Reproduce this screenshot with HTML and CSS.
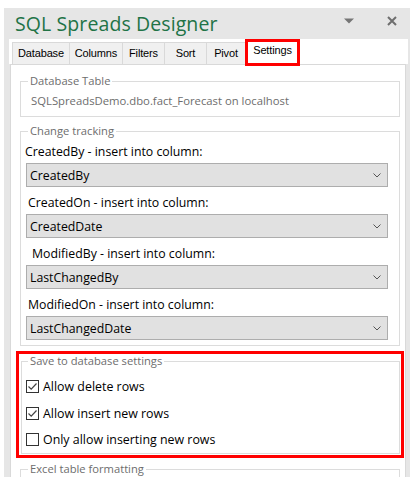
FILE: index.html
```html
<!DOCTYPE html>
<html>
<head>
<meta charset="utf-8">
<link rel="stylesheet" href="styles.css">
</head>
<body>
<div class="panel">
  <div class="titlebar">
    <span class="title">SQL Spreads Designer</span>
    <span class="ctrls">
      <svg class="ico-drop" width="10" height="6" viewBox="0 0 10 6"><path d="M0 0.5 H10 L5 5.5 Z" fill="#767676"/></svg>
      <svg class="ico-close" width="10" height="10" viewBox="0 0 10 10"><path d="M1 1 L9 9 M9 1 L1 9" stroke="#6e6e6e" stroke-width="2"/></svg>
    </span>
  </div>
  <div class="tabs">
    <div class="tab t-db">Database</div>
    <div class="tab t-col">Columns</div>
    <div class="tab t-fil">Filters</div>
    <div class="tab t-sort">Sort</div>
    <div class="tab t-piv">Pivot</div>
    <div class="tab t-set">Settings</div>
  </div>
  <div class="page">
    <fieldset class="group g-db">
      <legend>Database Table</legend>
      <div class="dbname">SQLSpreadsDemo.dbo.fact_Forecast on localhost</div>
    </fieldset>
    <fieldset class="group g-ct">
      <legend>Change tracking</legend>
      <div class="lbl l1">CreatedBy - insert into column:</div>
      <div class="select"><span>CreatedBy</span><svg width="8" height="5" viewBox="0 0 8 5"><path d="M0.5 0.5 L4 4 L7.5 0.5" fill="none" stroke="#555" stroke-width="1"/></svg></div>
      <div class="lbl l2">CreatedOn - insert into column:</div>
      <div class="select"><span>CreatedDate</span><svg width="8" height="5" viewBox="0 0 8 5"><path d="M0.5 0.5 L4 4 L7.5 0.5" fill="none" stroke="#555" stroke-width="1"/></svg></div>
      <div class="lbl l3">ModifiedBy - insert into column:</div>
      <div class="select"><span>LastChangedBy</span><svg width="8" height="5" viewBox="0 0 8 5"><path d="M0.5 0.5 L4 4 L7.5 0.5" fill="none" stroke="#555" stroke-width="1"/></svg></div>
      <div class="lbl l4">ModifiedOn - insert into column:</div>
      <div class="select"><span>LastChangedDate</span><svg width="8" height="5" viewBox="0 0 8 5"><path d="M0.5 0.5 L4 4 L7.5 0.5" fill="none" stroke="#555" stroke-width="1"/></svg></div>
    </fieldset>
    <div class="highlight">
      <fieldset class="group g-save">
        <legend>Save to database settings</legend>
        <div class="check c1"><span class="box"><svg width="11" height="11" viewBox="0 0 11 11"><path d="M1.5 5.5 L4.2 8.2 L9.5 2.5" fill="none" stroke="#444" stroke-width="1.2"/></svg></span><span>Allow delete rows</span></div>
        <div class="check c2"><span class="box"><svg width="11" height="11" viewBox="0 0 11 11"><path d="M1.5 5.5 L4.2 8.2 L9.5 2.5" fill="none" stroke="#444" stroke-width="1.2"/></svg></span><span>Allow insert new rows</span></div>
        <div class="check c3"><span class="box"></span><span>Only allow inserting new rows</span></div>
      </fieldset>
    </div>
    <fieldset class="group g-excel">
      <legend>Excel table formatting</legend>
      <div class="spacer"></div>
    </fieldset>
  </div>
</div>
</body>
</html>
```
FILE: styles.css
```css
* { box-sizing: border-box; }
html, body { margin: 0; padding: 0; background: #ffffff; }
body { font-family: "Open Sans", "Noto Sans", sans-serif; color: #000; }

.panel {
  margin: 8px 0 0 4px;
  width: 406px;
  height: 469px;
  background: #e6e6e6;
  overflow: hidden;
}

.titlebar {
  height: 31px;
  display: flex;
  align-items: center;
  padding-left: 11px;
  padding-right: 13px;
}
.title {
  font-size: 19.5px;
  line-height: 31px;
  color: #217346;
  letter-spacing: 0.1px;
}
.ctrls {
  margin-left: auto;
  align-self: flex-start;
  margin-top: 8px;
  height: 10px;
  display: flex;
  align-items: center;
  gap: 33px;
}
.ctrls svg { display: block; }

.tabs {
  margin-left: 5px;
  margin-right: 2px;
  height: 25px;
  background: #fff;
  padding: 3px 0 0 3px;
  display: flex;
  align-items: flex-start;
}
.tab {
  height: 22px;
  border: 1px solid #d9d9d9;
  border-bottom: none;
  border-right: none;
  background: #f0f0f0;
  font-family: "Liberation Sans", Arial, sans-serif;
  font-size: 11px;
  letter-spacing: -0.15px;
  line-height: 20px;
  text-align: center;
}
.t-db { width: 57px; }
.t-col { width: 53px; }
.t-fil { width: 42px; }
.t-sort { width: 42px; }
.t-piv { width: 39px; }
.t-set {
  width: 55px;
  height: 27px;
  margin-top: -3px;
  border: 3px solid #ff0000;
  background: #fff;
  line-height: 17px;
  position: relative;
  z-index: 1;
}

.page {
  margin-left: 6px;
  width: 396px;
  height: 420px;
  border: 1px solid #d9d9d9;
  background: #fff;
  padding: 0 5px 0 9px;
}

.group {
  margin: 0;
  padding: 0;
  border: 1px solid #dcdcdc;
  min-width: 0;
}
.group legend {
  font-size: 11.2px;
  line-height: 16px;
  color: #6d6d6d;
  padding: 0 2px;
  margin-left: 7px;
}

.g-db { margin-top: 8px; padding-bottom: 5px; }
.dbname {
  margin-top: 2px;
  margin-left: 10px;
  font-size: 11.3px;
  line-height: 20px;
  color: #6d6d6d;
}

.g-ct { margin-top: 6px; padding-bottom: 5px; }
.lbl {
  font-size: 12.3px;
  line-height: 20px;
  margin-top: 6px;
}
.l1 { margin-top: 3px; margin-left: 4px; }
.l2 { margin-left: 7px; }
.l3 { margin-left: 11px; }
.l4 { margin-left: 7px; }
.select {
  margin: 1px 0 0 5px;
  width: 362px;
  height: 24px;
  border: 1px solid #adadad;
  background: #e1e1e1;
  display: flex;
  align-items: center;
  justify-content: space-between;
  padding: 0 6px 0 3px;
  font-size: 12.3px;
}
.select svg { display: block; }

.highlight {
  margin: 5px -4px 0 -4px;
  border: 3px solid #ff0000;
  padding: 0 1px 1px 2px;
}
.g-save { padding-bottom: 4px; }
.g-save legend { line-height: 14px; margin-left: 6px; }
.check {
  display: flex;
  align-items: center;
  height: 20px;
  margin-left: 4px;
  font-size: 12.4px;
  gap: 4px;
}
.c1 { margin-top: 8px; }
.c2 { margin-top: 7px; }
.c3 { margin-top: 6px; }
.box {
  width: 13px;
  height: 13px;
  border: 1px solid #333;
  background: #fff;
  display: flex;
  align-items: center;
  justify-content: center;
}
.box svg { display: block; }

.g-excel { margin-top: 4px; }
.g-excel legend { line-height: 14px; }
.spacer { height: 30px; }
```
